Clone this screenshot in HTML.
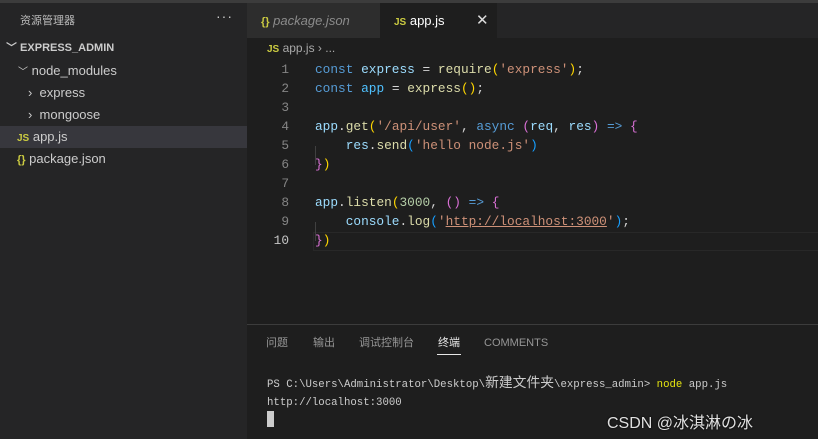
<!DOCTYPE html>
<html><head><meta charset="utf-8"><style>
*{margin:0;padding:0;box-sizing:border-box}
body{width:818px;height:439px;background:#1e1e1e;overflow:hidden;position:relative;font-family:"Liberation Sans","Noto Sans CJK SC",sans-serif;color:#ccc}
.top{position:absolute;left:0;top:0;width:818px;height:3px;background:#3c3c3c}
.side{position:absolute;left:0;top:3px;width:247px;height:436px;background:#252526}
.tabs{position:absolute;left:247px;top:3px;width:571px;height:35px;background:#252526}
.tab{position:absolute;top:0;height:35px;font-size:13px;line-height:35px}
.mono{font-family:"Liberation Mono","Noto Sans CJK SC",monospace;font-size:12.8px;white-space:pre}
.row{position:absolute;left:0;width:247px;height:22px;line-height:22px;font-size:13px;color:#ccc}
.js{color:#cbcb41;font-weight:bold;font-size:10px}
.br{color:#cbcb41;font-weight:bold;font-size:11px}
.ln{position:absolute;width:42px;left:247px;text-align:right;color:#858585}
.code{position:absolute;left:315px}
.k{color:#569cd6}.v{color:#9cdcfe}.f{color:#dcdcaa}.s{color:#ce9178}.y{color:#ffd700}.p{color:#da70d6}.b{color:#179fff}.n{color:#b5cea8}.t{color:#d4d4d4}
.ptab{position:absolute;top:336px;font-size:11px;color:#969696;line-height:14px}
.term{font-family:"Liberation Mono","Noto Sans CJK SC",monospace;font-size:10.7px;line-height:14px;white-space:pre;position:absolute;left:267px;color:#ccc}
.cj{font-size:13.8px}
</style></head><body>
<div class="top"></div>
<div class="side">
 <div style="position:absolute;left:20px;top:9px;font-size:11px;color:#bbb">资源管理器</div>
 <div style="position:absolute;left:216px;top:5px;font-size:14px;color:#ccc;letter-spacing:1px">···</div>
 <div class="row" style="top:34px;font-size:11px;font-weight:bold;padding-left:6px">﹀ EXPRESS_ADMIN</div>
</div>
<div class="row" style="top:60px;padding-left:18px"><span style="font-size:10px">﹀</span> node_modules</div>
<div class="row" style="top:82px;padding-left:28px">›&nbsp; express</div>
<div class="row" style="top:104px;padding-left:28px">›&nbsp; mongoose</div>
<div class="row" style="top:126px;background:#37373d;padding-left:17px"><span class="js">JS</span> app.js</div>
<div class="row" style="top:148px;padding-left:17px"><span class="br">{}</span> package.json</div>

<div class="tabs">
 <div class="tab" style="left:0;width:133px;background:#2d2d2d;padding-left:14px;color:#8b8b8b;font-style:italic"><span class="br" style="font-style:normal">{}</span> package.json</div>
 <div class="tab" style="left:133px;width:117px;background:#1e1e1e;padding-left:14px;color:#fff"><span class="js">JS</span> app.js<span style="position:absolute;left:96px;color:#ddd;font-size:15px">✕</span></div>
</div>
<div style="position:absolute;left:267px;top:41px;font-size:12px;color:#a9a9a9"><span class="js">JS</span> app.js › ...</div>

<div class="mono">
<div class="ln" style="top:62px">1</div><div class="ln" style="top:81px">2</div><div class="ln" style="top:100px">3</div><div class="ln" style="top:119px">4</div><div class="ln" style="top:138px">5</div><div class="ln" style="top:157px">6</div><div class="ln" style="top:176px">7</div><div class="ln" style="top:195px">8</div><div class="ln" style="top:214px">9</div><div class="ln" style="top:233px;color:#c6c6c6">10</div>
<div style="position:absolute;left:313px;top:232px;width:505px;height:19px;border:1px solid #282828;border-right:none"></div>
<div style="position:absolute;left:315px;top:146px;width:1px;height:19px;background:#404040"></div>
<div style="position:absolute;left:315px;top:222px;width:1px;height:19px;background:#404040"></div>
<div class="code" style="top:62px"><span class="k">const</span> <span class="v">express</span> <span class="t">=</span> <span class="f">require</span><span class="y">(</span><span class="s">'express'</span><span class="y">)</span><span class="t">;</span></div>
<div class="code" style="top:81px"><span class="k">const</span> <span class="v" style="color:#4fc1ff">app</span> <span class="t">=</span> <span class="f">express</span><span class="y">()</span><span class="t">;</span></div>
<div class="code" style="top:119px"><span class="v">app</span><span class="t">.</span><span class="f">get</span><span class="y">(</span><span class="s">'/api/user'</span><span class="t">,</span> <span class="k">async</span> <span class="p">(</span><span class="v">req</span><span class="t">,</span> <span class="v">res</span><span class="p">)</span> <span class="k">=&gt;</span> <span class="p">{</span></div>
<div class="code" style="top:138px">    <span class="v">res</span><span class="t">.</span><span class="f">send</span><span class="b">(</span><span class="s">'hello node.js'</span><span class="b">)</span></div>
<div class="code" style="top:157px"><span class="p">}</span><span class="y">)</span></div>
<div class="code" style="top:195px"><span class="v">app</span><span class="t">.</span><span class="f">listen</span><span class="y">(</span><span class="n">3000</span><span class="t">,</span> <span class="p">()</span> <span class="k">=&gt;</span> <span class="p">{</span></div>
<div class="code" style="top:214px">    <span class="v">console</span><span class="t">.</span><span class="f">log</span><span class="b">(</span><span class="s">'<span style="text-decoration:underline">http://localhost:3000</span>'</span><span class="b">)</span><span class="t">;</span></div>
<div class="code" style="top:233px"><span class="p">}</span><span class="y">)</span></div>
</div>

<div style="position:absolute;left:247px;top:324px;width:571px;height:1px;background:#3c3c3c"></div>
<div class="ptab" style="left:266px">问题</div>
<div class="ptab" style="left:313px">输出</div>
<div class="ptab" style="left:359px">调试控制台</div>
<div class="ptab" style="left:438px;color:#e7e7e7">终端</div>
<div style="position:absolute;left:437px;top:354px;width:24px;height:1px;background:#e7e7e7"></div>
<div class="ptab" style="left:484px">COMMENTS</div>
<div class="term" style="top:378px">PS C:\Users\Administrator\Desktop\<span class="cj">新建文件夹</span>\express_admin&gt; <span style="color:#e5e510">node</span> app.js</div>
<div class="term" style="top:396px">http://localhost:3000</div>
<div style="position:absolute;left:267px;top:411px;width:7px;height:16px;background:#ccc"></div>
<div style="position:absolute;left:607px;top:409px;font-size:16px;color:#e0e0e0;text-shadow:0 0 2px #000">CSDN @冰淇淋の冰</div>
</body></html>
